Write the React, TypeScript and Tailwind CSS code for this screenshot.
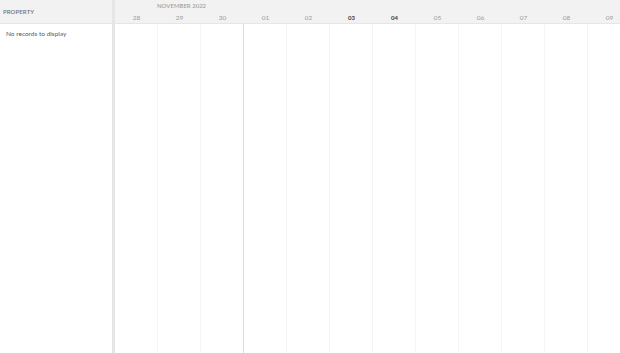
const days = [
  { label: '28', bold: false },
  { label: '29', bold: false },
  { label: '30', bold: false },
  { label: '01', bold: false },
  { label: '02', bold: false },
  { label: '03', bold: true },
  { label: '04', bold: true },
  { label: '05', bold: false },
  { label: '06', bold: false },
  { label: '07', bold: false },
  { label: '08', bold: false },
  { label: '09', bold: false },
];

export default function App() {
  return (
    <div className="flex h-[353px] w-[620px] overflow-hidden bg-white font-['Lato','Liberation_Sans',sans-serif]">
      {/* Left grid */}
      <div className="flex w-[112px] shrink-0 flex-col">
        <div className="flex h-[24px] items-center border-b border-[#e6e6e6] bg-[#f2f2f2] pl-[3px] text-[6px] font-semibold tracking-[0.1px] text-[#6f7683]">
          PROPERTY
        </div>
        <div className="pl-[6px] pt-[5px] text-[6.5px] text-[#555b66]">No records to display</div>
      </div>

      {/* Splitter */}
      <div className="w-[3px] shrink-0 bg-[#e6e6e8]" />

      {/* Timeline */}
      <div className="flex min-w-0 flex-1 flex-col overflow-hidden">
        <div className="h-[24px] shrink-0 border-b border-[#e6e6e6] bg-[#f2f2f2]">
          <div className="flex h-[11px] items-center pl-[42px] text-[6px] font-semibold text-[#a3a3a3]">
            NOVEMBER 2022
          </div>
          <div className="flex h-[12px]">
            {days.map((d) => (
              <div
                key={d.label}
                className={`flex w-[43px] shrink-0 items-center justify-center pt-[1px] ${
                  d.bold ? 'text-[6px] font-bold text-[#3a3a3a]' : 'text-[6.5px] text-[#9c9c9c]'
                }`}
              >
                {d.label}
              </div>
            ))}
          </div>
        </div>
        <div className="flex flex-1">
          {days.map((d, i) => (
            <div
              key={d.label}
              className={`w-[43px] shrink-0 border-r ${
                i === 2 ? 'border-[#dcdcdc]' : 'border-[#f4f4f4]'
              }`}
            />
          ))}
        </div>
      </div>
    </div>
  );
}
